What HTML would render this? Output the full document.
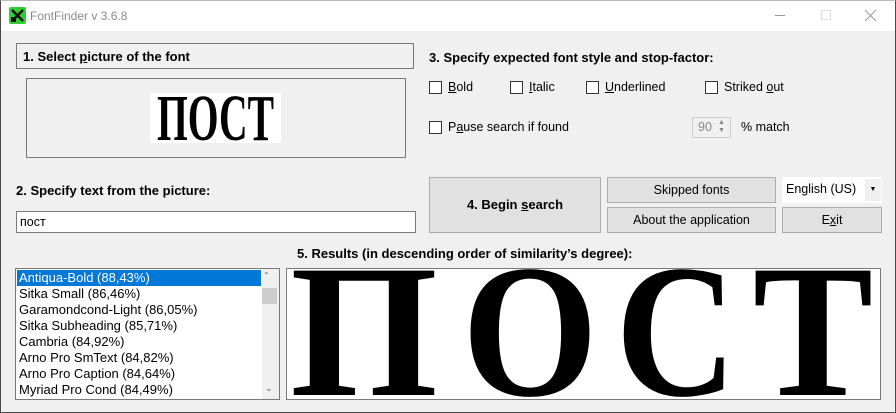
<!DOCTYPE html>
<html><head><meta charset="utf-8"><style>
*{box-sizing:border-box;margin:0;padding:0}
html,body{width:896px;height:413px;overflow:hidden}
body{background:#f0f0f0;font-family:"Liberation Sans","Noto Sans CJK SC",sans-serif;font-size:12.5px;color:#000;position:relative}
.a{position:absolute}
.frame{position:absolute;left:0;top:0;width:896px;height:413px;border:1px solid #4a4a4a;border-top:1px solid #bbb;pointer-events:none}
.title{left:0;top:0;width:896px;height:31px;background:#fff}
.b{font-weight:bold;font-size:13px}
.box{border:1px solid #7a7a7a}
.cb{width:13px;height:13px;border:1px solid #333;background:#fff}
.btn{border:1px solid #adadad;background:#e1e1e1;text-align:center}
u{text-decoration:underline}
.li{position:absolute;left:3px;height:16px;line-height:16px;font-size:13px;white-space:nowrap}
.L{position:absolute;top:-52px;width:200px;height:230px;text-align:center;font-family:'Liberation Serif',serif;font-weight:bold;font-size:190px;line-height:230px}
</style></head><body>
<div class="a title"></div>
<svg class="a" style="left:9px;top:7px" width="17" height="17" viewBox="0 0 17 17"><rect width="17" height="17" rx="2" fill="#33cc33"/><path d="M3 3L14 14M14 3L3 14" stroke="#111" stroke-width="2.5"/><rect x="2" y="10" width="5" height="5" fill="#111"/></svg>
<div class="a" style="left:30px;top:9px;color:#8a8a8a;font-size:12px">FontFinder v 3.6.8</div>
<div class="a" style="left:775px;top:15px;width:10px;height:1px;background:#999"></div>
<div class="a" style="left:821px;top:10px;width:10px;height:10px;border:1px solid #ddd"></div>
<svg class="a" style="left:865px;top:10px" width="11" height="11"><path d="M0 0L11 11M11 0L0 11" stroke="#999" stroke-width="1"/></svg>

<div class="a box" style="left:16px;top:43px;width:398px;height:26px"></div>
<div class="a b" style="left:23px;top:49px">1. Select <u>p</u>icture of the font</div>
<div class="a box" style="left:26px;top:78px;width:380px;height:80px"></div>
<div class="a" style="left:150px;top:93px;width:131px;height:50px;background:#fff;overflow:hidden">
<div class="a" style="left:-40px;top:-9px;width:211px;text-align:center;font-family:'Liberation Serif',serif;font-weight:bold;font-size:66px;line-height:70px;transform:scaleX(0.6);white-space:nowrap">ПОСТ</div></div>

<div class="a b" style="left:429px;top:50px">3. Specify expected font style and stop-factor:</div>
<div class="a cb" style="left:429px;top:81px"></div><div class="a" style="left:448px;top:80px"><u>B</u>old</div>
<div class="a cb" style="left:510px;top:81px"></div><div class="a" style="left:529px;top:80px"><u>I</u>talic</div>
<div class="a cb" style="left:586px;top:81px"></div><div class="a" style="left:605px;top:80px"><u>U</u>nderlined</div>
<div class="a cb" style="left:705px;top:81px"></div><div class="a" style="left:724px;top:80px">Striked <u>o</u>ut</div>
<div class="a cb" style="left:429px;top:121px"></div><div class="a" style="left:448px;top:120px">P<u>a</u>use search if found</div>
<div class="a" style="left:692px;top:117px;width:39px;height:21px;border:1px solid #ccc"></div>
<div class="a" style="left:698px;top:120px;color:#888">90</div>
<div class="a" style="left:715px;top:119px;width:13px;height:17px;background:#f0f0f0;font-size:7px;color:#888;line-height:8px;text-align:center">▲<br>▼</div>
<div class="a" style="left:741px;top:120px">% match</div>

<div class="a b" style="left:16px;top:183px">2. Specify text from the picture:</div>
<div class="a" style="left:16px;top:211px;width:400px;height:22px;background:#fff;border:1px solid #7a7a7a"></div>
<div class="a" style="left:20px;top:215px">пост</div>

<div class="a btn b" style="left:429px;top:177px;width:172px;height:56px;line-height:54px;font-size:13px">4. Begin <u>s</u>earch</div>
<div class="a btn" style="left:607px;top:177px;width:169px;height:26px;line-height:24px">Skipped fonts</div>
<div class="a btn" style="left:607px;top:207px;width:169px;height:26px;line-height:24px">About the application</div>
<div class="a" style="left:782px;top:177px;width:100px;height:26px;background:#fff"></div>
<div class="a" style="left:786px;top:182px">English (US)</div>
<div class="a" style="left:865px;top:179px;width:16px;height:22px;background:#f0f0f0;font-size:7px;line-height:22px;text-align:center">▼</div>
<div class="a btn" style="left:782px;top:207px;width:100px;height:26px;line-height:24px">E<u>x</u>it</div>

<div class="a b" style="left:297px;top:246px">5. Results (in descending order of similarity’s degree):</div>
<div class="a" style="left:15px;top:268px;width:265px;height:132px;background:#fff;border:1px solid #7a7a7a;overflow:hidden">
<div class="a" style="left:1px;top:1px;width:244px;height:16px;background:#0078d7"></div>
<div class="li" style="top:1px;color:#fff">Antiqua-Bold (88,43%)</div>
<div class="li" style="top:17px">Sitka Small (86,46%)</div>
<div class="li" style="top:33px">Garamondcond-Light (86,05%)</div>
<div class="li" style="top:49px">Sitka Subheading (85,71%)</div>
<div class="li" style="top:65px">Cambria (84,92%)</div>
<div class="li" style="top:81px">Arno Pro SmText (84,82%)</div>
<div class="li" style="top:97px">Arno Pro Caption (84,64%)</div>
<div class="li" style="top:113px">Myriad Pro Cond (84,49%)</div>
<div class="a" style="left:246px;top:0;width:17px;height:130px;background:#f0f0f0"></div>
<div class="a" style="left:246px;top:19px;width:15px;height:16px;background:#cdcdcd"></div>
<div class="a" style="left:247px;top:2px;font-size:8px;color:#606060">⌃</div>
<div class="a" style="left:249px;top:114px;font-size:9px;color:#606060">⌄</div>
</div>
<div class="a" style="left:286px;top:268px;width:595px;height:132px;background:#fff;border:1px solid #7a7a7a;overflow:hidden">
<div class="L" style="left:-23px">П</div>
<div class="L" style="left:143px;transform:scaleX(0.92)">О</div>
<div class="L" style="left:289px;transform:scaleX(0.88)">С</div>
<div class="L" style="left:426px;transform:scaleX(0.95)">Т</div>
</div>
<div class="frame"></div>
</body></html>
